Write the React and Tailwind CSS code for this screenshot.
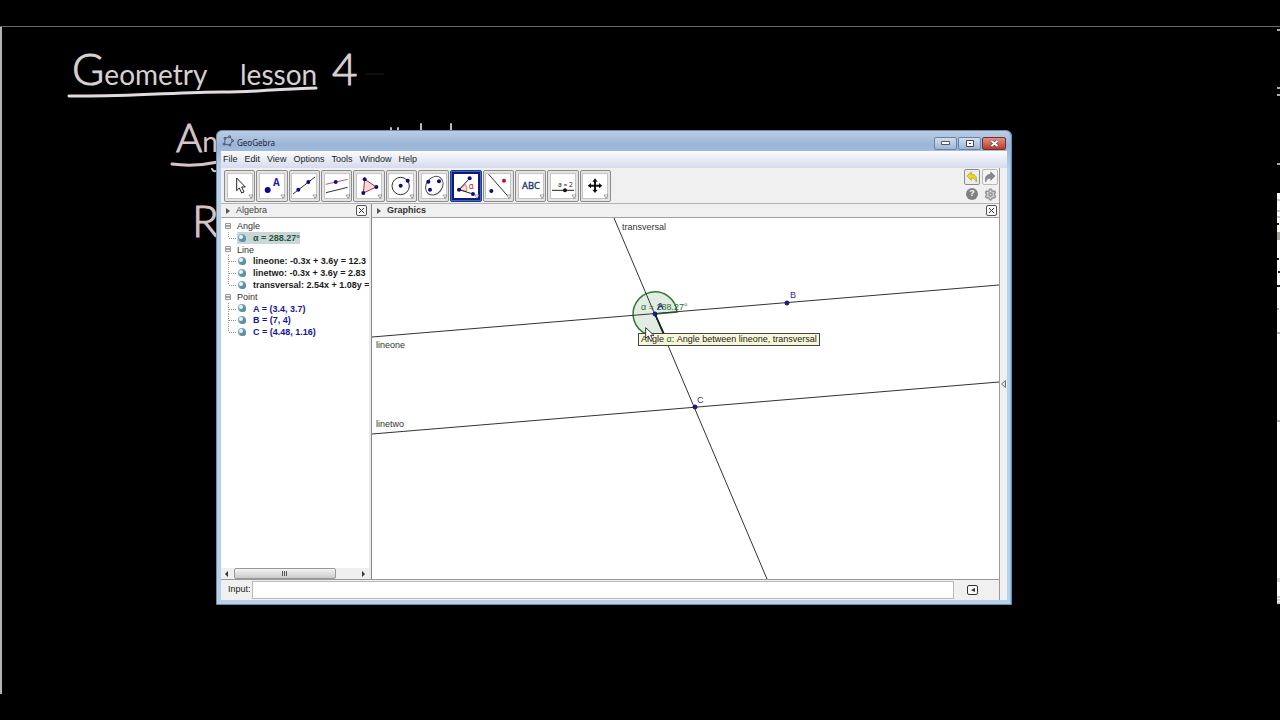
import { Settings } from 'lucide-react';

const NAVY = '#0a0a8c';

const MENUS = ['File', 'Edit', 'View', 'Options', 'Tools', 'Window', 'Help'];

const Dot = ({ x, y, r = 6, fill = NAVY }) => <circle cx={x} cy={y} r={r} fill={fill} />;

const TOOLS = [
    {
        name: 'Move',
        art: <path d="M26 12V50L34 42L41 57L48 54L41 39H52Z" fill="#fff" stroke="#222" strokeWidth="3" />,
    },
    {
        name: 'New Point',
        art: (
            <>
                <Dot x={23} y={48} r={9} />
                <text x="39" y="37" fontSize="29" fontWeight="700" fill="#1c1cb4">A</text>
            </>
        ),
    },
    {
        name: 'Line through Two Points',
        art: (
            <>
                <path d="M3 60L69 9" stroke="#333" strokeWidth="3" />
                <Dot x={19} y={47} />
                <Dot x={49} y={24} />
            </>
        ),
    },
    {
        name: 'Parallel Line',
        art: (
            <>
                <path d="M2 31L68 16" stroke="#d0506a" strokeWidth="3" />
                <path d="M3 56L68 40" stroke="#333" strokeWidth="3" />
                <Dot x={32} y={24} />
            </>
        ),
    },
    {
        name: 'Polygon',
        art: (
            <>
                <path d="M23 16L58 39L19 57Z" fill="#fbd9d9" stroke="#a8323c" strokeWidth="3" />
                <Dot x={23} y={16} />
                <Dot x={58} y={39} />
                <Dot x={19} y={57} />
            </>
        ),
    },
    {
        name: 'Circle with Center through Point',
        art: (
            <>
                <circle cx="35" cy="36" r="26" fill="none" stroke="#333" strokeWidth="3" />
                <Dot x={35} y={35} />
                <Dot x={56} y={20} />
            </>
        ),
    },
    {
        name: 'Ellipse',
        art: (
            <>
                <ellipse cx="37" cy="35" rx="24" ry="30" transform="rotate(38 37 35)" fill="none" stroke="#444" strokeWidth="3" />
                <Dot x={19} y={23} />
                <Dot x={51} y={22} />
                <Dot x={24} y={47} />
            </>
        ),
    },
    {
        name: 'Angle',
        active: true,
        art: (
            <>
                <path d="M15 47L34 31Q41 41 38 52Z" fill="#fbdcdc" stroke="#c83c3c" strokeWidth="2" />
                <path d="M47 13L15 47L57 60" fill="none" stroke="#222" strokeWidth="3" />
                <Dot x={47} y={13} />
                <Dot x={15} y={47} />
                <Dot x={57} y={60} />
                <text x="44" y="44" fontSize="24" fill="#c82828">α</text>
            </>
        ),
    },
    {
        name: 'Reflect Object about Line',
        art: (
            <>
                <path d="M8 1L67 68" stroke="#333" strokeWidth="3" />
                <Dot x={16} y={51} />
                <Dot x={54} y={20} fill="#b41414" />
            </>
        ),
    },
    {
        name: 'Insert Text',
        art: <text x="36" y="45" fontSize="28" fill="#17375e" stroke="#17375e" textAnchor="middle">ABC</text>,
    },
    {
        name: 'Slider',
        art: (
            <>
                <text x="43" y="39" fontSize="20" fill="#222" textAnchor="middle">a = 2</text>
                <path d="M3 49H69" stroke="#222" strokeWidth="3" />
                <Dot x={42} y={49} fill="#111" />
            </>
        ),
    },
    {
        name: 'Move Graphics View',
        art: (
            <path
                d="M36 13L44 23H39V32H48V27L58 35L48 43V38H39V47H44L36 57L28 47H33V38H24V43L14 35L24 27V32H33V23H28Z"
                fill="#111"
            />
        ),
    },
];

const OBJECTS = [
    { group: 'Angle' },
    { text: 'α = 288.27°', color: 'text-[#1c5c2c]', selected: true, last: true },
    { group: 'Line' },
    { text: 'lineone: -0.3x + 3.6y = 12.3', color: 'text-[#1a1a1a]' },
    { text: 'linetwo: -0.3x + 3.6y = 2.83', color: 'text-[#1a1a1a]' },
    { text: 'transversal: 2.54x + 1.08y =', color: 'text-[#1a1a1a]', last: true },
    { group: 'Point' },
    { text: 'A = (3.4, 3.7)', color: 'text-[#1414a0]' },
    { text: 'B = (7, 4)', color: 'text-[#1414a0]' },
    { text: 'C = (4.48, 1.16)', color: 'text-[#1414a0]', last: true },
];

function Blackboard() {
    return (
        <div className="relative h-full overflow-hidden font-['Lato',sans-serif] font-normal text-[#d8d0d2]">
            <div className="flex h-[72px] items-baseline pl-[70px] pt-2">
                <h1 className="flex w-[168px] items-baseline text-[28px]">
                    <span className="text-[44px] font-light [-webkit-text-stroke:1px]">G</span>eometry
                </h1>
                <span className="w-[92px] text-[28px]">lesson</span>
                <span className="text-[44px] font-light [-webkit-text-stroke:1px]">4</span>
            </div>
            <div className="flex h-[82px] items-baseline pl-[174px] pt-2 text-[#d8c4c8]">
                <span className="text-[40px] font-light leading-[60px] [-webkit-text-stroke:1px]">A</span>
                <span className="text-[28px]">n</span>
            </div>
            <div className="pl-[190px] pt-3 text-[44px] font-light leading-[54px] text-[#d8c4c8] [-webkit-text-stroke:1px]">R</div>
            <svg className="absolute left-0 top-0" width="480" height="240" fill="none" strokeLinecap="round">
                <path d="M67 69C120 70 180 65 220 65C260 65 290 61 314 61" stroke="#e2dcde" strokeWidth="3" />
                <path d="M364 47H382" stroke="#1c1c1c" strokeWidth="1" />
                <path d="M170 137C185 139 202 138 216 135" stroke="#d8c4c8" strokeWidth="3" />
                <path d="M210 142Q212 146 216 143" stroke="#d8c4c8" strokeWidth="2" />
                <path d="M389 101V103M396 101V103M419 97V103M449 97V103" stroke="#bbb" strokeWidth="2" />
            </svg>
        </div>
    );
}

// Slice of the neighbouring page that peeks in at the right side
function NextPage() {
    return (
        <svg className="w-[3px] shrink-0" viewBox="0 0 3 667" height="667" aria-hidden="true">
            <path d="M0 166H3V577H0Z" fill="#fff" />
            <path d="M0 3H3M0 61H3M0 68H3M0 137H3" stroke="#aaa" strokeWidth="2" />
            <path d="M0 173H3M0 184H3M0 190H3M0 212H3" stroke="#999" strokeWidth="1" />
            <path d="M0 205H3V213H0Z" fill="#a8a8a0" />
            <path d="M0 197H2M0 232H2M1 245H3M0 259H3" stroke="#222" strokeWidth="2" />
            <path d="M0 282H2M0 306H3M0 394H3" stroke="#777" strokeWidth="1" />
            <path d="M0 551H3V555H0Z" fill="#ddd" />
            <path d="M0 570H3M0 573H3M0 576H3" stroke="#999" strokeWidth="1" />
        </svg>
    );
}

function TitleBar() {
    return (
        <header className="flex h-5 shrink-0 items-center pl-px pr-px">
            <svg width="12" height="12" viewBox="0 0 36 36" fill="none" stroke="#334" strokeWidth="2">
                <path d="M9 10L23 5L32 17L24 30L8 28Z" />
                <g fill="#8c9cd0">
                    <circle cx="9" cy="10" r="3" />
                    <circle cx="23" cy="5" r="3" />
                    <circle cx="32" cy="17" r="3" />
                    <circle cx="24" cy="30" r="3" />
                    <circle cx="6" cy="27" r="3" />
                </g>
            </svg>
            <span className="ml-[3px] grow pt-1 font-['Noto_Sans',sans-serif] text-[8px] text-[#1c2430]">GeoGebra</span>
            <div className="flex gap-px pt-1">
                <button aria-label="Minimize" className="flex h-[13px] w-[23px] items-center justify-center rounded-xs border border-[#6c84a4] bg-linear-to-b from-[#d0dfef] to-[#9cb6d6]">
                    <svg width="9" height="4"><path d="M.5.5H8.5V3.5H.5Z" fill="#fff" stroke="#556" /></svg>
                </button>
                <button aria-label="Maximize" className="flex h-[13px] w-[23px] items-center justify-center rounded-xs border border-[#6c84a4] bg-linear-to-b from-[#d0dfef] to-[#9cb6d6]">
                    <svg width="8" height="7"><path d="M.5.5H7.5V6.5H.5Z" fill="#fff" stroke="#445" /><path d="M3 3H5V4H3Z" fill="#445" /></svg>
                </button>
                <button aria-label="Close" className="flex h-[13px] w-6 items-center justify-center rounded-xs border border-[#7c2c28] bg-linear-to-b from-[#dc9088] to-[#b83a2c]">
                    <svg width="9" height="7" viewBox="0 0 9 7">
                        <path d="M1.5 1L7.5 6M7.5 1L1.5 6" stroke="#533" strokeWidth="3" />
                        <path d="M1.5 1L7.5 6M7.5 1L1.5 6" stroke="#fff" strokeWidth="2" />
                    </svg>
                </button>
            </div>
        </header>
    );
}

function ToolButton({ name, art, active }) {
    return (
        <button
            aria-label={name}
            className={`mr-px flex h-8 items-center justify-center rounded-xs border ${active ? 'border-[#1c3c94] bg-[#3c68b8]' : 'border-[#8c8c8c] bg-[#e4e4e4]'}`}
        >
            <span className={`block size-[26px] border ${active ? 'border-[#10187c] bg-white outline outline-[#10187c]' : 'border-[#c4c4c4] bg-white'}`}>
                <svg className="size-6 overflow-visible font-['Noto_Sans',sans-serif]" viewBox="0 0 72 72">
                    {art}
                    <path d="M63 63H75L69 73Z" fill="#fff" stroke="#777" strokeWidth="2" />
                </svg>
            </span>
        </button>
    );
}

function Toolbar() {
    return (
        <div className="flex h-9 shrink-0 items-center justify-between border-b border-[#b4b4b4] bg-[#f0f0f0] pl-[3px] pr-px">
            <div className="grid w-[388px] grid-cols-12">
                {TOOLS.map((tool) => (
                    <ToolButton key={tool.name} {...tool} />
                ))}
            </div>
            <div className="grid grid-cols-2 gap-x-0.5 gap-y-px">
                <button aria-label="Undo" className="flex size-4 items-center justify-center rounded-xs border border-[#8c8c8c] bg-[#ececec]">
                    <svg width="12" height="12" viewBox="0 0 36 36">
                        <path d="M3 15L16 3V10C28 10 34 18 31 33C28 24 24 21 16 21V28Z" fill="#f0d820" stroke="#a89420" strokeWidth="2" />
                    </svg>
                </button>
                <button aria-label="Redo" className="flex size-4 items-center justify-center rounded-xs border border-[#b8b8b8] bg-[#f4f4f4]">
                    <svg width="12" height="12" viewBox="0 0 36 36">
                        <path d="M33 15L20 3V10C8 10 2 18 5 33C8 24 12 21 20 21V28Z" fill="#888" stroke="#777" strokeWidth="2" />
                    </svg>
                </button>
                <button aria-label="Help" className="flex size-4 items-center justify-center">
                    <span className="flex size-3 items-center justify-center rounded-full bg-[#808080] text-[9px] font-bold text-white">?</span>
                </button>
                <button aria-label="Preferences" className="flex size-4 items-center justify-center">
                    <Settings size={13} strokeWidth={3} className="text-[#999]" fill="#ddd" />
                </button>
            </div>
        </div>
    );
}

function PanelHeader({ title, bold, close }) {
    return (
        <div className="flex h-[14px] shrink-0 items-center border-b border-[#a0a0a0] bg-[#f0f0f0] pl-[5px] pr-0.5">
            <svg width="4" height="6"><path d="M0 0L4 3L0 6Z" fill="#555" /></svg>
            <h2 className={`ml-1.5 grow text-[9px] leading-[13px] ${bold ? 'font-bold text-[#333]' : 'text-[#444]'}`}>{title}</h2>
            {close && (
                <button aria-label={`Close ${title}`} className="flex size-[11px] items-center justify-center rounded-xs border border-[#555] bg-[#f8f8f8]">
                    <svg width="5" height="5"><path d="M0 0L5 5M5 0L0 5" stroke="#333" /></svg>
                </button>
            )}
        </div>
    );
}

function ObjectRow({ group, text, color, selected, last }) {
    if (group) {
        return (
            <li className="flex items-center gap-1.5 pl-1 text-[#333]">
                <svg width="6" height="6"><path d="M.5.5H5.5V5.5H.5Z" fill="#f4f4f4" stroke="#999" /><path d="M1 3H5" stroke="#555" /></svg>
                {group}
            </li>
        );
    }
    return (
        <li className="flex items-center pl-[7px] font-bold">
            <svg width="9" height="12" className="shrink-0" fill="none" stroke="#999" strokeDasharray="1 1">
                <path d={last ? 'M.5 0V6' : 'M.5 0V12'} />
                <path d="M1 6.5H9" />
            </svg>
            <span className={`flex h-full items-center ${selected ? 'bg-[#ccd4dc]' : ''}`}>
                <svg width="10" height="10" viewBox="0 0 10 10" className="shrink-0">
                    <circle cx="5" cy="5" r="4" fill="#7ca8b8" />
                    <circle cx="6" cy="6" r="3" fill="#5c929c" />
                    <circle cx="4" cy="4" r="2" fill="#e4f4fa" />
                </svg>
                <span className={`ml-1.5 whitespace-nowrap ${color}`}>{text}</span>
            </span>
        </li>
    );
}

function AlgebraView() {
    return (
        <section className="flex w-[148px] shrink-0 flex-col">
            <PanelHeader title="Algebra" close />
            <div className="grow overflow-hidden bg-white pt-0.5">
                <ul className="grid h-[118px] grid-rows-10 text-[9px] leading-3">
                    {OBJECTS.map((item) => (
                        <ObjectRow key={item.group || item.text} {...item} />
                    ))}
                </ul>
            </div>
            <div className="flex h-[11px] items-center justify-between bg-[#efefef] px-1">
                <button aria-label="Scroll left" className="w-[9px]">
                    <svg width="3" height="6"><path d="M3 0L0 3L3 6Z" fill="#333" /></svg>
                </button>
                <div className="flex h-[11px] w-[102px] items-center justify-center rounded-xs border border-[#999] bg-linear-to-b from-[#f4f4f4] to-[#cacaca]">
                    <svg width="6" height="5"><path d="M.5 0V5M2.5 0V5M4.5 0V5" stroke="#555" /></svg>
                </div>
                <button aria-label="Scroll right" className="ml-auto">
                    <svg width="3" height="6"><path d="M0 0L3 3L0 6Z" fill="#333" /></svg>
                </button>
            </div>
        </section>
    );
}

function GraphicsView() {
    return (
        <section className="flex min-w-0 grow flex-col border-l border-[#888]">
            <PanelHeader title="Graphics" bold close />
            <div className="relative grow overflow-hidden bg-white">
                <svg className="block text-[9px]" width="627" height="361" viewBox="0 0 627 361">
                    <path d="M283 96L305 94A22 22 0 1 0 292 116Z" fill="#e2ede2" stroke="#2c7c34" strokeWidth="1.5" />
                    <g stroke="#333" strokeWidth="1">
                        <path d="M0 119L627 67" />
                        <path d="M0 216L627 164" />
                        <path d="M242 0L395 361" />
                    </g>
                    <path d="M283 96L292 116" stroke="#122" strokeWidth="1.5" />
                    <g fill="#333">
                        <text x="250" y="12">transversal</text>
                        <text x="4" y="130">lineone</text>
                        <text x="4" y="209">linetwo</text>
                    </g>
                    <text x="269" y="92" fill="#2c6c34">α = 288.27°</text>
                    <g fill="#2c2c9c">
                        <text x="285" y="91" fontWeight="700">A</text>
                        <text x="418" y="80">B</text>
                        <text x="325" y="185">C</text>
                    </g>
                    <g fill="#1818b0" stroke="#101070" strokeWidth="1">
                        <circle cx="283" cy="96" r="2" />
                        <circle cx="415" cy="85" r="2" />
                        <circle cx="323" cy="189" r="2" />
                    </g>
                </svg>
                <div role="tooltip" className="absolute left-[266px] top-[115px] whitespace-nowrap border border-[#444] bg-[#f8f8d8] px-0.5 text-[9px] leading-[11px] text-[#222]">
                    Angle <b className="font-normal text-[#1c6c2c]">α</b>: Angle between lineone, transversal
                </div>
                <svg className="absolute left-[273px] top-[109px]" width="10" height="15" viewBox="0 0 30 45">
                    <path d="M2 2V34L10 27L17 41L23 38L17 25H27Z" fill="#fff" stroke="#333" strokeWidth="3" />
                </svg>
            </div>
        </section>
    );
}

function InputBar() {
    return (
        <form className="flex h-[21px] shrink-0 items-center border-t border-[#999] bg-[#f0f0f0] pl-[7px] pr-[21px] text-[9px]">
            <label htmlFor="command" className="w-6 text-[#222]">Input:</label>
            <input id="command" className="h-[18px] min-w-0 grow border border-[#bbb] bg-white px-1 outline-none" />
            <button type="button" aria-label="Show input help" className="ml-[13px] flex h-2.5 w-[11px] items-center justify-center rounded-xs border border-[#333] bg-[#f8f8f8]">
                <svg width="4" height="4"><path d="M4 0L0 2L4 4Z" fill="#333" /></svg>
            </button>
        </form>
    );
}

function GeoGebraWindow() {
    return (
        <div className="absolute left-[216px] top-[130px] flex h-[475px] w-[796px] flex-col rounded-t-md border border-[#6c8cb0] bg-[#b7cce6] bg-linear-to-b from-[#bccde2] from-0% via-[#9ab4d8] via-3% to-[#b9d0e9] to-8% px-1 pb-1 font-['Liberation_Sans',sans-serif] shadow-[inset_-1px_0_0_#7cc4ec]">
            <TitleBar />
            <nav className="flex h-[17px] shrink-0 items-center gap-[7px] bg-linear-to-b from-[#fbfbfd] to-[#d6dcee] pl-0.5 text-[9px] text-[#222]">
                {MENUS.map((menu) => (
                    <button key={menu}>{menu}</button>
                ))}
            </nav>
            <div className="flex min-h-0 grow">
                <main className="flex min-w-0 grow flex-col">
                    <Toolbar />
                    <div className="flex min-h-0 grow gap-0.5 bg-[#eaeaea]">
                        <AlgebraView />
                        <GraphicsView />
                    </div>
                    <InputBar />
                </main>
                <aside className="flex w-2 shrink-0 items-center justify-center border-l border-[#999] bg-[#f0f0f0]">
                    <button aria-label="Show sidebar">
                        <svg width="5" height="8"><path d="M4.5 .5L.5 4L4.5 7.5Z" fill="#ddd" stroke="#777" /></svg>
                    </button>
                </aside>
            </div>
        </div>
    );
}

export default function App() {
    return (
        <div className="relative min-h-screen overflow-hidden bg-black pt-[26px]">
            <div className="flex h-[668px] border-t border-[#666]">
                <div className="w-0.5 shrink-0 bg-[#b4b4b4]" />
                <div className="min-w-0 grow">
                    <Blackboard />
                </div>
                <NextPage />
            </div>
            <GeoGebraWindow />
        </div>
    );
}
